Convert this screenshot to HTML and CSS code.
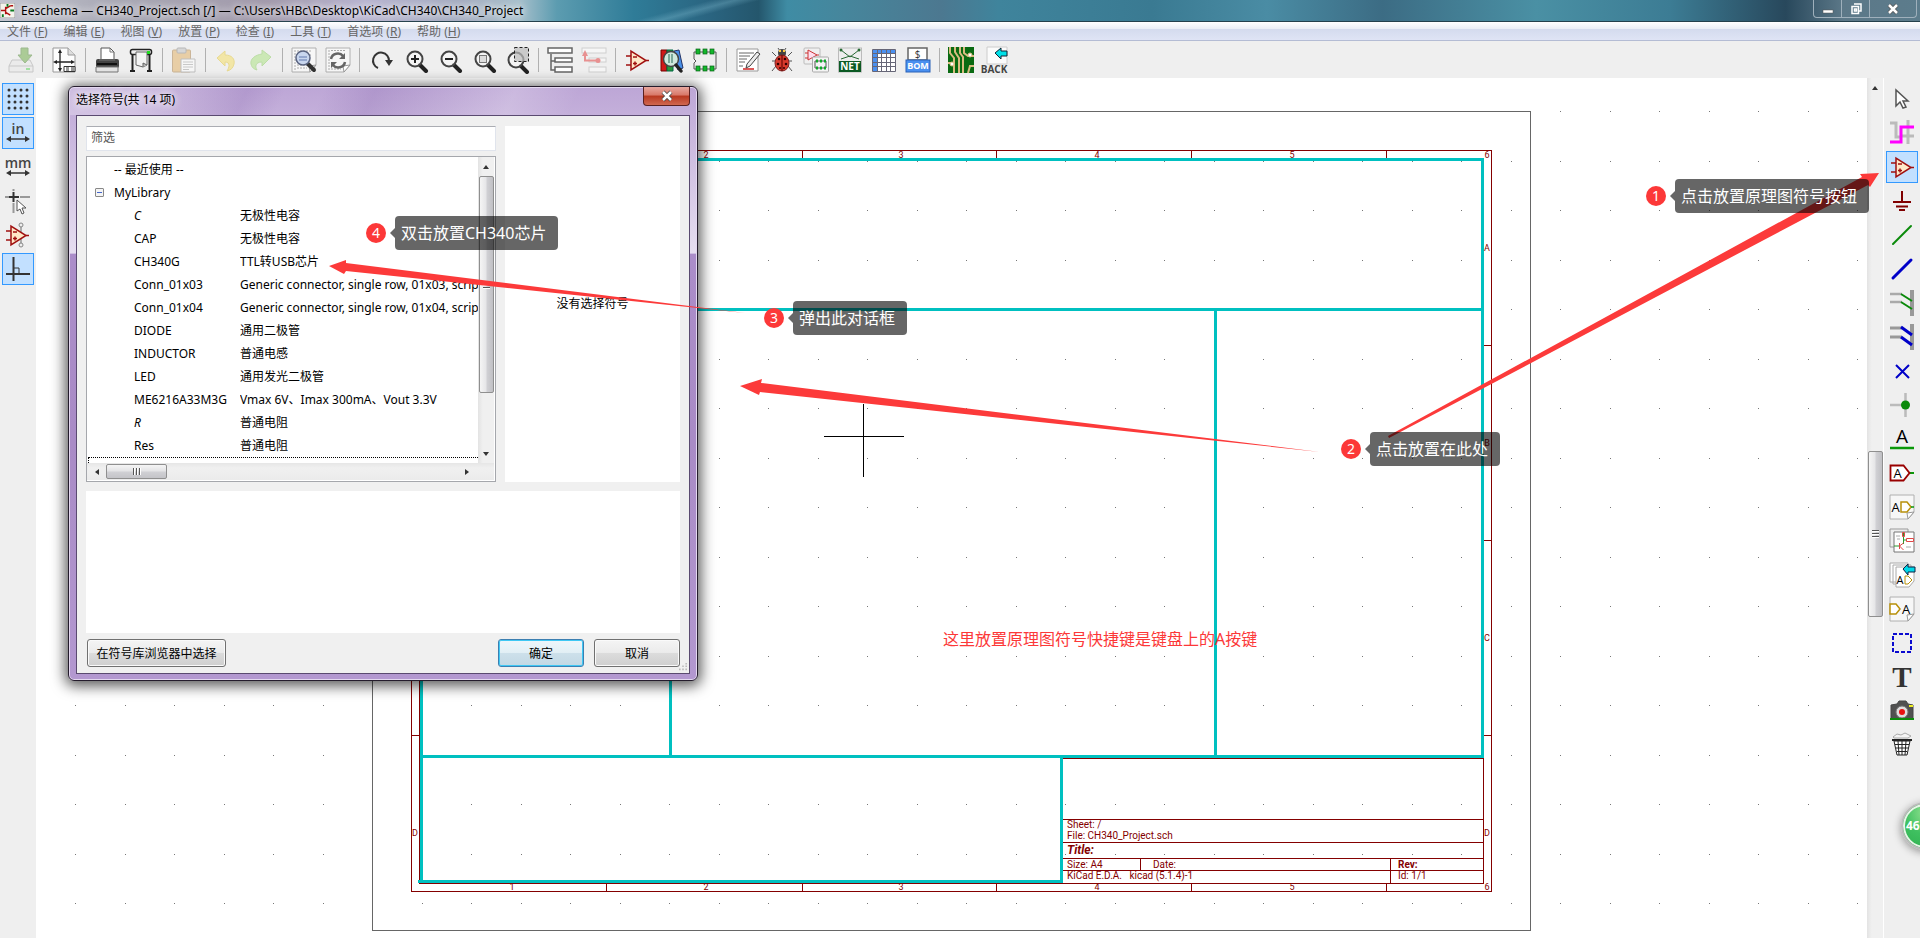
FILE: index.html
```html
<!DOCTYPE html>
<html lang="zh-CN">
  <head>
    <meta charset="UTF-8" />
    <meta name="viewport" content="width=device-width, initial-scale=1.0" />
    <title>Eeschema — CH340_Project.sch</title>
    <link rel="stylesheet" href="styles.css">
  </head>
  <body>
    <svg class="defs" aria-hidden="true">
      <symbol id="opamp" viewBox="0 0 26 26">
        <path d="M7 4v19l15-9.500z" fill="#ffe8c8" stroke="#a01010" stroke-width="1.500" />
        <path d="M2 9h5M2 18h5M22 13.500h3M9 10h4M9 16.500h4M11 14.500v4" stroke="#a01010" stroke-width="1.500" fill="none" />
      </symbol>
      <symbol id="paper" viewBox="0 0 26 26">
        <path d="M1 1h24v17l-6 7H1z" fill="#f7f7f7" stroke="#b0b0b0" />
        <path d="M25 18l-7 1 1 6z" fill="#fff" stroke="#999" />
      </symbol>
      <symbol id="lens" viewBox="0 0 26 26">
        <path d="M17 18l6 6" stroke="#222" stroke-width="4" stroke-linecap="round" />
        <circle cx="12" cy="12" r="7.500" fill="#f6f6f6" fill-opacity=".6" stroke="#444" stroke-width="2" />
      </symbol>
    </svg>

    <div class="window">
      <header class="titlebar">
        <svg class="app-icon" viewBox="0 0 16 16"><rect width="16" height="16" rx="1" fill="#f4f4ec" stroke="#999" /><path d="M1 8h5M6 4v8M6 6l5-3M11 3h3M6 10l5 3" stroke="#b01010" stroke-width="1.500" fill="none" /><path d="M8 1v3M11 8h4M3 12v3" stroke="#0a7a20" stroke-width="2" /></svg>
        <span class="title-text">Eeschema — CH340_Project.sch [/] — C:\Users\HBc\Desktop\KiCad\CH340\CH340_Project</span>
        <div class="win-buttons">
          <button class="win-btn" aria-label="最小化"><svg viewBox="0 0 14 12"><rect x="2" y="7" width="10" height="3" fill="#fff" stroke="#555" stroke-width=".5" /></svg></button>
          <button class="win-btn" aria-label="还原"><svg viewBox="0 0 14 12"><path d="M5 1h7v7h-2M3 3.500h6.500v7H3zM5.500 6h2v2h-2z" fill="none" stroke="#fff" stroke-width="1.500" /></svg></button>
          <button class="win-btn win-close" aria-label="关闭"><svg viewBox="0 0 14 12"><path d="M3 2l8 8M11 2l-8 8" stroke="#555" stroke-width="4" /><path d="M3 2l8 8M11 2l-8 8" stroke="#fff" stroke-width="2.500" /></svg></button>
        </div>
      </header>

      <nav class="menubar">
        <button>文件 (<u>F</u>)</button>
        <button>编辑 (<u>E</u>)</button>
        <button>视图 (<u>V</u>)</button>
        <button>放置 (<u>P</u>)</button>
        <button>检查 (<u>I</u>)</button>
        <button>工具 (<u>T</u>)</button>
        <button>首选项 (<u>R</u>)</button>
        <button>帮助 (<u>H</u>)</button>
      </nav>

      <div class="toolbar">
        <button class="faded" aria-label="保存"><svg viewBox="0 0 26 26"><path d="M4 13h18l3 6v6H1v-6z" fill="#e8e8e8" stroke="#999" /><path d="M1 19h24" stroke="#999" /><rect x="18" y="21" width="4" height="2" fill="#4c4" /><path d="M13 1h7v7h4l-7 8-7-8h3z" fill="#5aa02c" stroke="#3a7a1c" /></svg></button>
        <hr>
        <button aria-label="页面设置"><svg viewBox="0 0 26 26"><path d="M2 1h15l7 7v17H2z" fill="#fdfdfd" stroke="#999" /><path d="M17 1v7h7" fill="#ddd" stroke="#999" /><path d="M9 4v19M4 15h18" stroke="#222" stroke-width="1.300" /><path d="M9 2l-2 4h4zM9 25l-2-4h4zM2 15l4-2v4zM24 15l-4-2v4z" fill="#222" /><path d="M13 19.500h11v5H13z" fill="#fff" stroke="#333" /><path d="M15 21h3M20 21h3M15 23h3M20 23h3" stroke="#333" /></svg></button>
        <hr>
        <button aria-label="打印"><svg viewBox="0 0 26 26"><path d="M7 1h9l4 4v9H7z" fill="#fff" stroke="#555" /><path d="M16 1v4h4" fill="none" stroke="#777" /><rect x="2" y="12" width="23" height="9" rx="2" fill="#444" /><path d="M3 17h20" stroke="#111" stroke-width="2" /><path d="M5 13h16" stroke="#777" /><path d="M2 20h22v5H2z" fill="#e4e4e4" stroke="#777" /></svg></button>
        <button aria-label="绘图"><svg viewBox="0 0 26 26"><rect x="2.500" y="2.500" width="21" height="5" rx="2" fill="#eee" stroke="#222" stroke-width="1.500" /><path d="M4.500 8v16M21.500 8v16M2 24h5M19 24h5" stroke="#222" stroke-width="2" /><path d="M8 5h11v13l-4 2-7-2z" fill="#f4f4f4" stroke="#666" /><path d="M15 20v-4l4 2" fill="#bbb" stroke="#666" /><rect x="19" y="4" width="3" height="3" fill="#2d2" /></svg></button>
        <hr>
        <button class="faded" aria-label="粘贴"><svg viewBox="0 0 26 26"><rect x="1.500" y="3" width="18" height="22" rx="1" fill="#e0a850" stroke="#a07030" /><rect x="6" y="1" width="9" height="5" rx="1" fill="#bbb" stroke="#777" /><path d="M10 12h14v13H10z" fill="#fff" stroke="#888" /><path d="M12 15h10M12 17.500h10M12 20h10M12 22.500h6" stroke="#999" /></svg></button>
        <hr>
        <button class="faded" aria-label="撤消"><svg viewBox="0 0 26 26"><path d="M3 11l8-7v4c7 0 10 4 9 9-1 4-3 6-7 7 2-3 4-9-2-9v4z" fill="#f6dc50" stroke="#e0c020" /></svg></button>
        <button class="faded" aria-label="重做"><svg viewBox="0 0 26 26"><path d="M23 10L14 3v4C7 8 2 12 3 17c1 4 3 5 6 6-2-3-2-8 5-8v4z" fill="#a0e070" stroke="#80c850" /></svg></button>
        <hr>
        <button aria-label="查找"><svg viewBox="0 0 26 26"><use href="#paper" /><path d="M4 3v20M6 4h15M6 8h15M6 18h12M6 21h10" stroke="#aaa" stroke-dasharray="2 1" /><path d="M17 17l6 6" stroke="#333" stroke-width="4" stroke-linecap="round" /><circle cx="12" cy="11" r="7" fill="#c8d6ee" stroke="#5a6480" stroke-width="1.500" /><path d="M8 10h8M8 13h8" stroke="#8298c4" stroke-width="1.500" /></svg></button>
        <button aria-label="查找和替换"><svg viewBox="0 0 26 26"><use href="#paper" /><path d="M4 3v20M6 3.500h15M6 22h10" stroke="#aaa" stroke-dasharray="2 1" /><path d="M6 12c1-6 9-7 12-3M20 15c-1 6-9 7-12 3" fill="none" stroke="#666" stroke-width="2.500" /><path d="M20 6v6h-6zM6 21v-6h6z" fill="#666" /></svg></button>
        <hr>
        <button aria-label="刷新"><svg viewBox="0 0 26 26"><path d="M10 21a8 8 0 1 1 11-7" fill="none" stroke="#333" stroke-width="2" /><path d="M17 13h8l-4 6z" fill="#333" /></svg></button>
        <button aria-label="放大"><svg viewBox="0 0 26 26"><use href="#lens" x="1" /><path d="M13 8v8M9 12h8" stroke="#222" stroke-width="2" /></svg></button>
        <button aria-label="缩小"><svg viewBox="0 0 26 26"><use href="#lens" x="1" /><path d="M9 12h8" stroke="#222" stroke-width="2" /></svg></button>
        <button aria-label="适合页面"><svg viewBox="0 0 26 26"><use href="#lens" x="1" /><rect x="9.500" y="8.500" width="7" height="7" fill="#ddd" stroke="#777" /></svg></button>
        <button aria-label="缩放到选择"><svg viewBox="0 0 26 26"><use href="#lens" y="1" /><rect x="10.500" y=".5" width="14" height="14" fill="#bbb" fill-opacity=".7" stroke="#222" stroke-dasharray="3 2" /></svg></button>
        <hr>
        <button aria-label="层次结构"><svg viewBox="0 0 26 26"><path d="M4 7v16h4M4 14h4" fill="none" stroke="#666" stroke-width="1.500" /><g fill="#fff" stroke="#666" stroke-width="1.500"><rect x="1" y="1" width="24" height="5" /><rect x="8" y="11" width="17" height="4" /><rect x="8" y="20" width="17" height="5" /></g></svg></button>
        <button class="faded" aria-label="离开图纸"><svg viewBox="0 0 26 26"><g fill="#fff" stroke="#aaa"><rect x="1" y="1" width="24" height="5" /><rect x="8" y="11" width="17" height="4" /><rect x="8" y="20" width="17" height="5" /></g><path d="M17 13.500H4V7" fill="none" stroke="#e02020" stroke-width="2" /><path d="M4 3L1 9h6z" fill="#e02020" /><circle cx="17" cy="13.500" r="2.500" fill="#e02020" /></svg></button>
        <hr>
        <button aria-label="符号编辑器"><svg viewBox="0 0 26 26"><use href="#opamp" /></svg></button>
        <button aria-label="符号库浏览器"><svg viewBox="0 0 26 26"><path d="M3 3h6v21H3z" fill="#d01818" stroke="#700" /><path d="M9 3h6v21H9z" fill="#2a9a3a" stroke="#064" /><path d="M16 4l5-1 4 18-5 2z" fill="#4a90e8" stroke="#236" /><circle cx="13" cy="12" r="7.500" fill="#cfe8dc" stroke="#444" stroke-width="1.500" /><path d="M11 7v9M14 7v9" stroke="#7aa898" stroke-width="2" /><path d="M18 18l5 6" stroke="#222" stroke-width="3.500" stroke-linecap="round" /></svg></button>
        <button aria-label="封装编辑器"><svg viewBox="0 0 26 26"><path d="M2 5h22v17H2v-6l2-2-2-2z" fill="#eee" stroke="#555" /><g fill="#12b82a" stroke="#0a6018" stroke-width=".7"><rect x="4" y="2" width="4" height="5" /><rect x="11" y="2" width="4" height="5" /><rect x="18" y="2" width="4" height="5" /><rect x="4" y="19" width="4" height="5" /><rect x="11" y="19" width="4" height="5" /><rect x="18" y="19" width="4" height="5" /></g></svg></button>
        <hr>
        <button aria-label="注释原理图"><svg viewBox="0 0 26 26"><path d="M2 2h21v22H2z" fill="#fff" stroke="#999" /><path d="M4 6h15M4 9h11M4 12h8M4 15h6M4 19h4" stroke="#666" /><path d="M8 22h11" stroke="#d02020" stroke-width="1.500" /><path d="M12 17l10-12 3 2-10 12-4 2z" fill="#eee" stroke="#444" /></svg></button>
        <button aria-label="电气规则检查"><svg viewBox="0 0 26 26"><path d="M7 9L3 5M6 14H3M7 19l-4 5M19 9l4-4M20 14h3M19 19l4 5M11 4L9 1M15 4l2-3" stroke="#555" /><circle cx="13" cy="6" r="4" fill="#444" /><path d="M10 4h2M14 4h2" stroke="#fc4" stroke-width="2" /><ellipse cx="13" cy="16" rx="7" ry="8" fill="#d83a2c" stroke="#802020" /><path d="M13 8v16" stroke="#500" /><g fill="#300"><circle cx="10" cy="12" r="1.300" /><circle cx="16" cy="12" r="1.300" /><circle cx="9" cy="17" r="1.300" /><circle cx="17" cy="17" r="1.300" /><circle cx="11" cy="21" r="1" /><circle cx="15" cy="21" r="1" /></g></svg></button>
        <button aria-label="分配封装"><svg viewBox="0 0 26 26"><rect x="1" y="1" width="16" height="16" rx="1" fill="#f0f0f0" stroke="#bbb" /><path d="M5 3v10l9-5zM2 6h3M2 11h3M14 8h2" fill="#fde" stroke="#c33" /><rect x="9.500" y="10" width="16" height="15" rx="1" fill="#f4f4f4" stroke="#aaa" /><path d="M12 14h11v7H12z" fill="none" stroke="#555" /><path d="M13 14h2M17 14h2M21 14h2M13 21h2M17 21h2M21 21h2" stroke="#12a82a" stroke-width="3" /></svg></button>
        <button aria-label="生成网表"><svg viewBox="0 0 26 26"><rect x="1.500" y="1" width="23" height="24" fill="#eee" stroke="#bbb" /><path d="M4 3l9 7 9-7M4 12l9-3 9 3" fill="none" stroke="#286a34" /><circle cx="4" cy="3" r="1.500" fill="#286a34" /><circle cx="22" cy="3" r="1.500" fill="#286a34" /><rect x="2" y="14" width="22" height="11" fill="#0c5a24" /><text x="13" y="23" class="t-net">NET</text></svg></button>
        <button aria-label="符号字段表"><svg viewBox="0 0 26 26"><path d="M2 2h22v22H2z" fill="#fff" /><path d="M2 2h22v4H2zM2 6h4v18H2z" fill="#4a90f0" /><path d="M1.500 2.500h23v22h-23zM6.500 2v22M10.500 2v22M15.500 2v22M19.500 2v22M2 6.500h22M2 10.500h22M2 15.500h22M2 19.500h22" fill="none" stroke="#667" /></svg></button>
        <button aria-label="生成物料清单"><svg viewBox="0 0 26 26"><path d="M3 1h19v12H3z" fill="#fff" stroke="#666" stroke-width="1.500" /><text x="12.500" y="11" class="t-dollar">$</text><rect x="1" y="13" width="24" height="12" fill="#4a90f0" stroke="#2a62b8" /><text x="13" y="22" class="t-bom">BOM</text></svg></button>
        <hr>
        <button aria-label="打开电路板编辑器"><svg viewBox="0 0 26 26"><path d="M0 0h26v26H0z" fill="#0a6a12" /><path d="M2 0v6l4 5v15M7 0v5l4 6v15M12 0v6l3 4v16M16 0v6l4 3h6M0 16h4M26 19h-4l-2 7" fill="none" stroke="#d8bc80" stroke-width="2" /><circle cx="4" cy="17" r="2" fill="#fff" stroke="#d8bc80" /><circle cx="22" cy="8" r="2" fill="#fff" stroke="#d8bc80" /></svg></button>
        <button aria-label="返回"><svg viewBox="0 0 26 26"><path d="M5 0h20v17H5z" fill="#fbfbfb" stroke="#ccc" /><path d="M13 6l6-5v3h6v5h-6v3z" fill="#00e0e8" stroke="#123" /><text x="12" y="26" class="t-back">BACK</text></svg></button>
      </div>

      <main class="workspace">
        <div class="side-tools">
          <button class="active" aria-label="显示网格"><svg viewBox="0 0 26 26"><path d="M4 4h19M4 10h19M4 16h19M4 22h19" stroke="#333" stroke-width="3" stroke-linecap="round" stroke-dasharray="0 6" /></svg></button>
          <button class="active" aria-label="英寸"><svg viewBox="0 0 26 26"><text x="13" y="14" class="t-unit">in</text><path d="M3 19h20" stroke="#333" stroke-width="1.500" /><path d="M1 19l5-3v6zM25 19l-5-3v6z" fill="#333" /></svg></button>
          <button aria-label="毫米"><svg viewBox="0 0 26 26"><text x="13" y="14" class="t-unit">mm</text><path d="M3 19h20" stroke="#333" stroke-width="1.500" /><path d="M1 19l5-3v6zM25 19l-5-3v6z" fill="#333" /></svg></button>
          <button aria-label="光标形状"><svg viewBox="0 0 26 26"><path d="M0 9h4M15 9h10M8.500 1v2M8.500 15v10" stroke="#999" stroke-width="2" /><path d="M4 9h10M8.500 4v10" stroke="#333" stroke-width="2" /><path d="M12 12v11l3-2 2 5 2-1-2-5h4z" fill="#fff" stroke="#555" /></svg></button>
          <button aria-label="隐藏引脚"><svg viewBox="0 0 26 26"><path d="M16 4v18" stroke="#999" stroke-width="1.500" /><circle cx="16" cy="3" r="2" fill="#eee" stroke="#888" /><circle cx="16" cy="23" r="2" fill="#eee" stroke="#888" /><use href="#opamp" x="-1" /></svg></button>
          <button class="active" aria-label="直角布线"><svg viewBox="0 0 26 26"><path d="M8.500 1v24M1 18h24" stroke="#333" stroke-width="2" /><path d="M9 12h5v6" fill="none" stroke="#333" /></svg></button>
        </div>

        <div class="canvas">
          <svg class="sheet">
            <defs>
              <pattern id="grid" x="1065" y="804" width="99" height="99" patternUnits="userSpaceOnUse">
                <path d="M0 0h1v1H0zM50 0h1v1h-1zM0 50h1v1H0zM50 50h1v1h-1z" fill="#777" />
              </pattern>
            </defs>
            <!-- drawing uses window coordinates -->
            <g transform="translate(-36 -78)">
              <rect x="36" y="78" width="1830" height="860" fill="url(#grid)" />
              <rect x="372.500" y="111.500" width="1158" height="819" fill="none" stroke="#666" />
              <g class="frame">
                <rect x="411.500" y="150.500" width="1080" height="741" />
                <rect x="419.500" y="158.500" width="1064" height="725" />
                <path d="M606.500 150v8M802.500 150v8M996.500 150v8M1191.500 150v8M1386.500 150v8M606.500 883v8M802.500 883v8M996.500 883v8M1191.500 883v8M1386.500 883v8" />
                <path d="M411 345.500h8M411 540.500h8M411 735.500h8M1483 345.500h8M1483 540.500h8M1483 735.500h8" />
                <path d="M1063 758.500h420M1063 819.500h420M1063 842.500h420M1063 858.500h420M1063 870.500h420M1140.500 858v12M1390.500 858v25" />
              </g>
              <g class="room">
                <path d="M418 881.500h645M421.500 158v723M420 159.500h1064M1482.500 158v600M420 309.500h1063M420 756.500h1064M670.500 309v447M1215.500 309v447M1061.500 756v127" />
              </g>
              <g class="mark">
                <text x="512" y="158">1</text><text x="706" y="158">2</text><text x="901" y="158">3</text><text x="1097" y="158">4</text><text x="1292" y="158">5</text><text x="1487" y="158">6</text>
                <text x="512" y="890">1</text><text x="706" y="890">2</text><text x="901" y="890">3</text><text x="1097" y="890">4</text><text x="1292" y="890">5</text><text x="1487" y="890">6</text>
                <text x="415" y="251">A</text><text x="415" y="446">B</text><text x="415" y="641">C</text><text x="415" y="836">D</text>
                <text x="1487" y="251">A</text><text x="1487" y="446">B</text><text x="1487" y="641">C</text><text x="1487" y="836">D</text>
              </g>
              <g class="block">
                <text x="1067" y="828">Sheet: /</text>
                <text x="1067" y="839">File: CH340_Project.sch</text>
                <text x="1067" y="854" class="strong">Title:</text>
                <text x="1067" y="868">Size: A4</text>
                <text x="1153" y="868">Date:</text>
                <text x="1398" y="868" class="rev">Rev:</text>
                <text x="1067" y="879">KiCad E.D.A.&#160; &#160;kicad (5.1.4)-1</text>
                <text x="1398" y="879">Id: 1/1</text>
              </g>
              <path d="M824 436.500h80M863.500 404v73" stroke="#000" />
            </g>
          </svg>
        </div>

        <div class="scroll-v page-scroll">
          <span class="arrow up"></span>
          <span class="thumb"><i></i></span>
        </div>

        <div class="side-tools right">
          <button aria-label="选择"><svg viewBox="0 0 26 26"><path d="M7 4v16l4-4 3 6 3-1-3-6h5z" fill="#fff" stroke="#555" stroke-width="1.500" /></svg></button>
          <button aria-label="高亮网络"><svg viewBox="0 0 26 26"><path d="M1 3h6v14h6M19 0v24M13 16h12" fill="none" stroke="#bbb" stroke-width="3" /><path d="M1 22h11V7h13" fill="none" stroke="#f0f" stroke-width="3" /></svg></button>
          <button class="active" aria-label="放置符号"><svg viewBox="0 0 26 26"><use href="#opamp" /></svg></button>
          <button aria-label="放置电源"><svg viewBox="0 0 26 26"><path d="M13 3v11M4 14h18M7 18.500h12M10 22h6" stroke="#800000" stroke-width="2" /></svg></button>
          <button aria-label="放置导线"><svg viewBox="0 0 26 26"><path d="M4 22L22 4" stroke="#0a8a0a" stroke-width="2" stroke-linecap="round" /></svg></button>
          <button aria-label="放置总线"><svg viewBox="0 0 26 26"><path d="M4 22L22 4" stroke="#0000c8" stroke-width="3" stroke-linecap="round" /></svg></button>
          <button aria-label="导线入口"><svg viewBox="0 0 26 26"><path d="M23 0v26" stroke="#999" stroke-width="4" /><path d="M1 4h12M1 12h12" stroke="#aaa" stroke-width="2.500" /><path d="M12 4l11 7M12 12l11 7" stroke="#0a8a0a" stroke-width="2" /></svg></button>
          <button aria-label="总线入口"><svg viewBox="0 0 26 26"><path d="M23 0v26" stroke="#999" stroke-width="4" /><path d="M1 4h12M1 13h12" stroke="#999" stroke-width="3" /><path d="M12 3l11 8M12 13l11 8" stroke="#0000c8" stroke-width="3" /></svg></button>
          <button aria-label="不连接"><svg viewBox="0 0 26 26"><path d="M7 7l13 13M20 7L7 20" stroke="#0000c8" stroke-width="2" /></svg></button>
          <button aria-label="结点"><svg viewBox="0 0 26 26"><path d="M16.500 1v24M1 13h14" stroke="#bbb" stroke-width="2.500" /><circle cx="16.500" cy="13" r="4.500" fill="#0a8a0a" /></svg></button>
          <button aria-label="网络标签"><svg viewBox="0 0 26 26"><text x="13" y="17" class="t-label big">A</text><path d="M1 22h24" stroke="#0a980a" stroke-width="2.500" /></svg></button>
          <button aria-label="全局标签"><svg viewBox="0 0 26 26"><path d="M20 13h5" stroke="#0a980a" stroke-width="2" /><path d="M1.500 5.500h13l6 7.500-6 7.500h-13z" fill="#fff" stroke="#900" stroke-width="1.800" /><text x="8.500" y="18" class="t-label">A</text></svg></button>
          <button aria-label="层次标签"><svg viewBox="0 0 26 26"><use href="#paper" /><text x="6.500" y="18" class="t-label">A</text><path d="M12 8h6l4 5-4 5h-6z" fill="#fff" stroke="#b8900a" stroke-width="1.500" /><path d="M22 13h3" stroke="#0a980a" stroke-width="1.500" /></svg></button>
          <button aria-label="层次图纸"><svg viewBox="0 0 26 26"><path d="M1 1h18v18H1z" fill="#eee" stroke="#999" /><path d="M5 4h20v20H5z" fill="#fff" stroke="#777" /><path d="M14.500 4v8M15 12h3M5 18h5M14.500 12v4" fill="none" stroke="#2a9a2a" /><path d="M17.500 10.500h7v3h-7zM13.500 4.500h2v4h-2zM14.500 15l-4 3 4 4M10.500 15v6" fill="none" stroke="#e04848" /><path d="M7 8h4M8 11h3M17 19h5" stroke="#aaa" /></svg></button>
          <button aria-label="导入层次标签"><svg viewBox="0 0 26 26"><path d="M1 1h18v19H1zM4 3h18v19H4z" fill="#fff" stroke="#aaa" /><path d="M7 5h18v14l-5 6H7z" fill="#fff" stroke="#aaa" /><text x="11" y="22" class="t-small">A</text><path d="M16 14h3l4 4-4 4h-3z" fill="#fff" stroke="#b8900a" /><path d="M14 7l5-5v3h7v5h-7v3z" fill="#00d8e8" stroke="#124" /></svg></button>
          <button aria-label="图纸引脚"><svg viewBox="0 0 26 26"><use href="#paper" /><path d="M1 8h6l4 5-4 5H1z" fill="#fff" stroke="#b8900a" stroke-width="1.500" /><text x="17" y="18" class="t-label">A</text></svg></button>
          <button aria-label="图形线"><svg viewBox="0 0 26 26"><rect x="4" y="4" width="18" height="18" fill="none" stroke="#0a0ad0" stroke-width="2" stroke-dasharray="4 2" /></svg></button>
          <button aria-label="文本"><svg viewBox="0 0 26 26"><text x="13" y="23" class="t-serif">T</text></svg></button>
          <button aria-label="图片"><svg viewBox="0 0 26 26"><path d="M2 7l6-1 2-3h7l2 3 5 1v14H2z" fill="#505050" stroke="#444" /><circle cx="13" cy="14" r="6" fill="#ddd" stroke="#777" /><circle cx="13" cy="14" r="3" fill="#e81010" /><rect x="20" y="7" width="4" height="2" fill="#ee2" /><path d="M1 21h24" stroke="#0a8a0a" stroke-width="2" /></svg></button>
          <button aria-label="删除"><svg viewBox="0 0 26 26"><path d="M4 5l4-3 4 1 4-2 6 3-3 2H5z" fill="#f4f4f4" stroke="#aaa" /><path d="M3 8h20" stroke="#222" stroke-width="2" /><path d="M5 9h16l-3 14H8z" fill="#fff" stroke="#222" /><path d="M9 9l1 14M13 9v14M17 9l-1 14M6 12.500h14M7 16h12M8 19.500h10" stroke="#222" /></svg></button>
        </div>
      </main>

      <section class="dialog" aria-label="选择符号">
        <div class="dialog-title">
          <span>选择符号(共 14 项)</span>
          <button class="dialog-close" aria-label="关闭"><svg viewBox="0 0 14 12"><path d="M3 2l8 8M11 2l-8 8" stroke="#444" stroke-width="4" /><path d="M3 2l8 8M11 2l-8 8" stroke="#fff" stroke-width="2.500" /></svg></button>
        </div>
        <div class="dialog-body">
          <div class="chooser">
            <div class="picker">
              <input class="filter" type="text" placeholder="筛选" aria-label="筛选">
              <div class="tree">
                <div class="tree-view">
                  <table>
                    <colgroup><col class="col-name"><col></colgroup>
                    <tr class="lib"><td colspan="2">-- 最近使用 --</td></tr>
                    <tr class="lib open"><td colspan="2"><i class="minus"></i>MyLibrary</td></tr>
                    <tr><td><em>C</em></td><td>无极性电容</td></tr>
                    <tr><td>CAP</td><td>无极性电容</td></tr>
                    <tr><td>CH340G</td><td>TTL转USB芯片</td></tr>
                    <tr><td>Conn_01x03</td><td>Generic connector, single row, 01x03, script</td></tr>
                    <tr><td>Conn_01x04</td><td>Generic connector, single row, 01x04, script</td></tr>
                    <tr><td>DIODE</td><td>通用二极管</td></tr>
                    <tr><td>INDUCTOR</td><td>普通电感</td></tr>
                    <tr><td>LED</td><td>通用发光二极管</td></tr>
                    <tr><td>ME6216A33M3G</td><td>Vmax 6V、Imax 300mA、Vout 3.3V</td></tr>
                    <tr><td><em>R</em></td><td>普通电阻</td></tr>
                    <tr><td>Res</td><td>普通电阻</td></tr>
                  </table>
                  <div class="focus-row"></div>
                </div>
                <div class="scroll-v tree-scroll">
                  <span class="arrow up"></span>
                  <span class="thumb"><i></i></span>
                  <span class="arrow down"></span>
                </div>
                <div class="scroll-h">
                  <span class="arrow left"></span>
                  <span class="thumb"><i></i></span>
                  <span class="arrow next"></span>
                </div>
              </div>
            </div>
            <div class="preview">没有选择符号</div>
          </div>
          <div class="details"></div>
          <div class="actions">
            <button class="btn browse">在符号库浏览器中选择</button>
            <button class="btn primary">确定</button>
            <button class="btn">取消</button>
          </div>
          <svg class="grip" viewBox="0 0 10 10"><path d="M8 1h2M8 4h2M8 8h2M4 4h2M4 8h2M0 8h2" stroke="#bbb" stroke-width="2" /></svg>
        </div>
      </section>

      <svg class="arrows" aria-hidden="true">
        <g fill="#fc3a3a">
          <path d="M1388 436L1862 177 1860 174 1879 173 1870 187 1868 185 1389 438z" />
          <path d="M1320 452L760 392 759 395 740 386 762 379 761 383z" />
          <path d="M745 313L346 271 344 274 329 266 346 260 346 263z" />
        </g>
      </svg>

      <div class="note note-1"><b>1</b><span>点击放置原理图符号按钮</span></div>
      <div class="note note-2"><b>2</b><span>点击放置在此处</span></div>
      <div class="note note-3"><b>3</b><span>弹出此对话框</span></div>
      <div class="note note-4"><b>4</b><span>双击放置CH340芯片</span></div>
      <p class="hint">这里放置原理图符号快捷键是键盘上的A按键</p>
      <div class="ball">46</div>
    </div>
  </body>
</html>
```
FILE: styles.css
```css
* {
    margin: 0;
    padding: 0;
    box-sizing: border-box;
}

body, html {
    height: 100%;
    overflow: hidden;
}

body {
    font-family: "Noto Sans", "Noto Sans CJK SC", sans-serif;
    font-size: 12px;
    color: #000;
    background: #efefef;
}

button {
    font: inherit;
    color: inherit;
    border: none;
    background: none;
}

.defs {
    display: none;
}

.window {
    position: relative;
    display: flex;
    flex-direction: column;
    height: 100%;
    overflow: hidden;
}

/* title bar */
.titlebar {
    display: flex;
    align-items: center;
    height: 22px;
    border-bottom: 1px solid #24404c;
    background:
        linear-gradient(165deg, transparent 42%, rgba(130,190,210,.35) 47%, transparent 52%) 500px 0 / 420px 22px no-repeat,
        linear-gradient(90deg, #c4c6d0 0, #a8a8b4 6%, #a29aac 14%, #b8b4d0 19%, #a4acc0 24%, #a8c0cc 27%, #5c9cb0 29%, #2f7c98 33%, #2a6480 37%, #24566c 39.500%, #3f8ca4 41%, #46869c 44%, #4c7890 49%, #3f849c 52%, #3a7a92 60%, #4a8ca4 66%, #3c6c84 72%, #4a90a4 80%, #3c7c94 87%, #28485c 93%, #5c7888 96%, #5c7c8c 100%);
}

.app-icon {
    width: 15px;
    height: 15px;
    margin-right: 6px;
}

.title-text {
    flex: 1;
    white-space: nowrap;
    text-shadow: 0 0 6px #fff, 0 0 10px #fff;
}

.win-buttons {
    display: flex;
    align-self: flex-start;
    height: 18px;
    margin-right: 3px;
    border: 1px solid #9fb0bc;
    border-top: none;
    border-radius: 0 0 4px 4px;
}

.win-btn {
    display: flex;
    align-items: center;
    justify-content: center;
    width: 28px;
    border-right: 1px solid #9fb0bc;
}

.win-btn svg, .dialog-close svg {
    width: 14px;
    height: 12px;
}

.win-close {
    width: 46px;
    border-right: none;
}

/* menu */
.menubar {
    display: flex;
    height: 19px;
    border-bottom: 1px solid #b4bcd4;
    background: linear-gradient(#fff, #eaeef6 38%, #d4dbee 40%, #dfe4f5);
    color: #666;
}

.menubar button {
    padding: 0 9px 0 7px;
    line-height: 20px;
}

/* top toolbar */
.toolbar {
    display: flex;
    align-items: center;
    height: 37px;
    padding-left: 4px;
}

.toolbar button {
    display: flex;
    justify-content: center;
    width: 34px;
}

.toolbar svg, .side-tools svg {
    width: 26px;
    height: 26px;
    overflow: visible;
}

.toolbar hr {
    width: 1px;
    height: 24px;
    margin: 0 4px;
    border: none;
    background: #b0b0b0;
}

.faded {
    opacity: .45;
}

.t-net, .t-bom, .t-dollar, .t-back, .t-unit, .t-label, .t-small, .t-serif {
    text-anchor: middle;
    font-family: "Open Sans", "Noto Sans", sans-serif;
}

.t-net {
    font-size: 10px;
    font-weight: bold;
    fill: #fff;
}

.t-bom {
    font-size: 9px;
    font-weight: bold;
    fill: #fff;
}

.t-dollar {
    font-size: 10px;
    fill: #333;
}

.t-back {
    font-size: 10px;
    font-weight: bold;
    fill: #444;
}

.t-unit {
    font-size: 14px;
    font-weight: 600;
    fill: #444;
}

.t-label {
    font-size: 13px;
}

.t-label.big {
    font-size: 19px;
}

.t-small {
    font-size: 11px;
}

.t-serif {
    font-family: "Liberation Serif", serif;
    font-size: 29px;
    font-weight: bold;
    fill: #333;
}

/* work area */
.workspace {
    flex: 1;
    display: flex;
    min-height: 0;
}

.side-tools {
    display: flex;
    flex-direction: column;
    gap: 2px;
    width: 36px;
    padding: 5px 2px;
}

.side-tools button {
    display: flex;
    align-items: center;
    justify-content: center;
    width: 32px;
    height: 32px;
    border: 1px solid transparent;
}

.side-tools .active {
    border-color: #3399ff;
    background: #c2e0ff;
}

.canvas {
    flex: 1;
    min-width: 0;
    background: #fff;
}

.sheet {
    display: block;
    width: 100%;
    height: 100%;
}

.frame {
    fill: none;
    stroke: #840000;
}

.room {
    fill: none;
    stroke: #00c0c0;
    stroke-width: 3px;
}

.mark, .block {
    fill: #840000;
    font-family: Roboto, sans-serif;
    font-size: 10px;
}

.mark {
    font-size: 9px;
    text-anchor: middle;
}

.strong, .rev {
    font-weight: bold;
}

.strong {
    font-size: 12px;
    font-style: italic;
}

/* scrollbars */
.scroll-v {
    display: grid;
    justify-items: center;
    width: 16px;
    background: linear-gradient(90deg, #e3e3e3, #f0f0f0 30%, #f0f0f0);
}

.page-scroll {
    width: 17px;
    grid-template-rows: 20px 353fr 166fr 321fr;
    border-right: 1px solid #fff;
}

.tree-scroll {
    grid-template-rows: 19px 217px 1fr 19px;
}

.page-scroll .thumb {
    grid-row: 3;
}

.tree-scroll .down {
    grid-row: 4;
}

.thumb {
    display: flex;
    align-items: center;
    justify-content: center;
    width: 15px;
    border: 1px solid #8f8f8f;
    border-radius: 2px;
    background: linear-gradient(90deg, #f5f5f5, #e6e6e8 45%, #d0d0d4 55%, #c0c0c4);
}

.thumb i {
    width: 7px;
    height: 8px;
    background: repeating-linear-gradient(#555 0 1px, #fff 1px 2px, transparent 2px 3px);
}

.arrow {
    place-self: center;
    border: 3px solid transparent;
}

.up {
    border-top: none;
    border-bottom: 4px solid #333;
}

.down {
    border-bottom: none;
    border-top: 4px solid #333;
}

.left {
    border-left: none;
    border-right: 4px solid #333;
}

.next {
    border-right: none;
    border-left: 4px solid #333;
}

.scroll-h {
    grid-column: 1 / 3;
    display: grid;
    grid-template-columns: 19px 61px 1fr 18px 18px;
    background: linear-gradient(#e6e6e6, #f0f0f0 30%, #ebebeb);
}

.scroll-h .thumb {
    width: auto;
    height: 15px;
    margin-top: 1px;
    background: linear-gradient(#f5f5f5, #e4e4e6 45%, #d0d0d4 55%, #c4c4c8);
}

.scroll-h .thumb i {
    width: 8px;
    height: 7px;
    background: repeating-linear-gradient(90deg, #555 0 1px, #fff 1px 2px, transparent 2px 3px);
}

.scroll-h .next {
    grid-column: 4;
}

/* symbol chooser */
.dialog {
    position: absolute;
    left: 68px;
    top: 86px;
    width: 630px;
    padding: 0 7px 6px;
    border: 1px solid #241c2c;
    border-radius: 6px;
    background:
        linear-gradient(115deg, rgba(255,255,255,.25) 0 12%, rgba(90,50,140,.12) 28%, transparent 34% 40%, rgba(90,50,140,.14) 48%, rgba(255,255,255,.2) 70%, transparent 80%) 0 0 / 100% 28px no-repeat,
        linear-gradient(#bda6d6, #e6def0 28%, #ab8dc9 28.200%, #a98bc6 60%, #b398d0);
    box-shadow: inset 0 0 0 1px #e4d8f0, 0 2px 14px 3px rgba(0, 0, 0, .65);
}

.dialog-title {
    display: flex;
    align-items: center;
    justify-content: space-between;
    height: 28px;
    line-height: 26px;
    text-shadow: 0 0 8px #fff, 0 0 8px #fff;
}

.dialog-title span {
    align-self: flex-start;
}

.dialog-close {
    display: flex;
    align-items: center;
    justify-content: center;
    align-self: flex-start;
    width: 47px;
    height: 19px;
    border: 1px solid #5a2020;
    border-top: none;
    border-radius: 0 0 4px 4px;
    background: linear-gradient(#e8a8a0, #d87868 45%, #b83820 50%, #d06850);
}

.dialog-body {
    position: relative;
    padding: 10px 9px 6px;
    border: 1px solid #5a4a70;
    background: #f0f0f0;
}

.chooser {
    display: grid;
    grid-template-columns: 410px 1fr;
    gap: 9px;
}

.picker {
    display: flex;
    flex-direction: column;
    gap: 5px;
}

.filter {
    height: 25px;
    padding: 0 4px 2px;
    border: 1px solid #e0e4ec;
    border-top-color: #abadb3;
    font: inherit;
}

.filter::placeholder {
    color: #555;
}

.tree {
    display: grid;
    grid-template-columns: 1fr 16px;
    grid-template-rows: 306px 17px;
    padding-right: 1px;
    padding-bottom: 1px;
    border: 1px solid #a5a7ac;
    background: #fff;
}

.tree-view {
    padding-top: 1px;
    overflow: hidden;
}

.tree table {
    width: 100%;
    table-layout: fixed;
    border-collapse: collapse;
}

.col-name {
    width: 153px;
}

.tree td {
    height: 23px;
    line-height: 23px;
    overflow: hidden;
    white-space: nowrap;
}

.tree td:first-child {
    padding-left: 47px;
}

.tree .lib td {
    padding-left: 27px;
}

.tree .open td {
    padding-left: 8px;
}

.minus {
    display: inline-block;
    width: 9px;
    height: 9px;
    margin-right: 10px;
    border: 1px solid #888;
    border-radius: 1px;
    background: linear-gradient(#46c, #46c) center / 5px 1px no-repeat #f4f4f4;
}

.focus-row {
    height: 6px;
    margin-left: 1px;
    border-top: 1px dotted #000;
    border-left: 1px dotted #000;
}

.preview {
    display: flex;
    align-items: center;
    justify-content: center;
    padding-bottom: 2px;
    background: #fff;
}

.details {
    height: 142px;
    margin-top: 9px;
    background: #fff;
}

.actions {
    display: flex;
    gap: 10px;
    margin-top: 6px;
}

.btn {
    width: 86px;
    height: 28px;
    border: 1px solid #707070;
    border-radius: 3px;
    background: linear-gradient(#f4f4f4, #ebebeb 48%, #dcdcdc 50%, #cfcfcf);
    box-shadow: inset 0 0 0 1px #fafafa;
}

.browse {
    width: 139px;
    margin-left: 1px;
    margin-right: auto;
}

.primary {
    border-color: #3c7fb1;
    background: linear-gradient(#eef6fa, #e2eff5 48%, #cde0ea 50%, #c2d8e4);
    box-shadow: inset 0 0 0 1px #3fc8f4;
}

.grip {
    position: absolute;
    right: 2px;
    bottom: 2px;
    width: 8px;
    height: 8px;
}

/* annotations */
.arrows {
    position: absolute;
    inset: 0;
    width: 100%;
    height: 100%;
    pointer-events: none;
}

.note {
    position: absolute;
    display: flex;
    align-items: center;
    gap: 9px;
    font-size: 16px;
    color: #fff;
}

.note b {
    width: 20px;
    height: 20px;
    border-radius: 50%;
    background: #fc3838;
    font-size: 14px;
    font-weight: normal;
    line-height: 20px;
    text-align: center;
}

.note span {
    position: relative;
    height: 34px;
    padding: 0 12px 0 6px;
    border-radius: 4px;
    background: rgba(0, 0, 0, .6);
    line-height: 34px;
    white-space: nowrap;
}

.note span::before {
    content: "";
    position: absolute;
    left: -5px;
    top: 12px;
    border: 5px solid transparent;
    border-left: none;
    border-right-color: rgba(0, 0, 0, .6);
}

.note-1 {
    left: 1646px;
    top: 179px;
}

.note-2 {
    left: 1341px;
    top: 432px;
}

.note-3 {
    left: 764px;
    top: 301px;
}

.note-4 {
    left: 366px;
    top: 216px;
}

.hint {
    position: absolute;
    left: 943px;
    top: 628px;
    font-size: 16px;
    line-height: 22px;
    color: #fc3838;
    white-space: nowrap;
}

.ball {
    position: absolute;
    right: -29px;
    top: 802px;
    width: 48px;
    height: 48px;
    padding-left: 3px;
    border: 2px solid #bbb;
    border-radius: 50%;
    background: radial-gradient(circle at 50% 20%, #8ee08e, #3fc060 50%, #2eb050);
    box-shadow: inset 0 0 0 2px #e8f4e8, 0 2px 8px rgba(0, 0, 0, .4);
    color: #fff;
    font-weight: bold;
    line-height: 44px;
}
```
